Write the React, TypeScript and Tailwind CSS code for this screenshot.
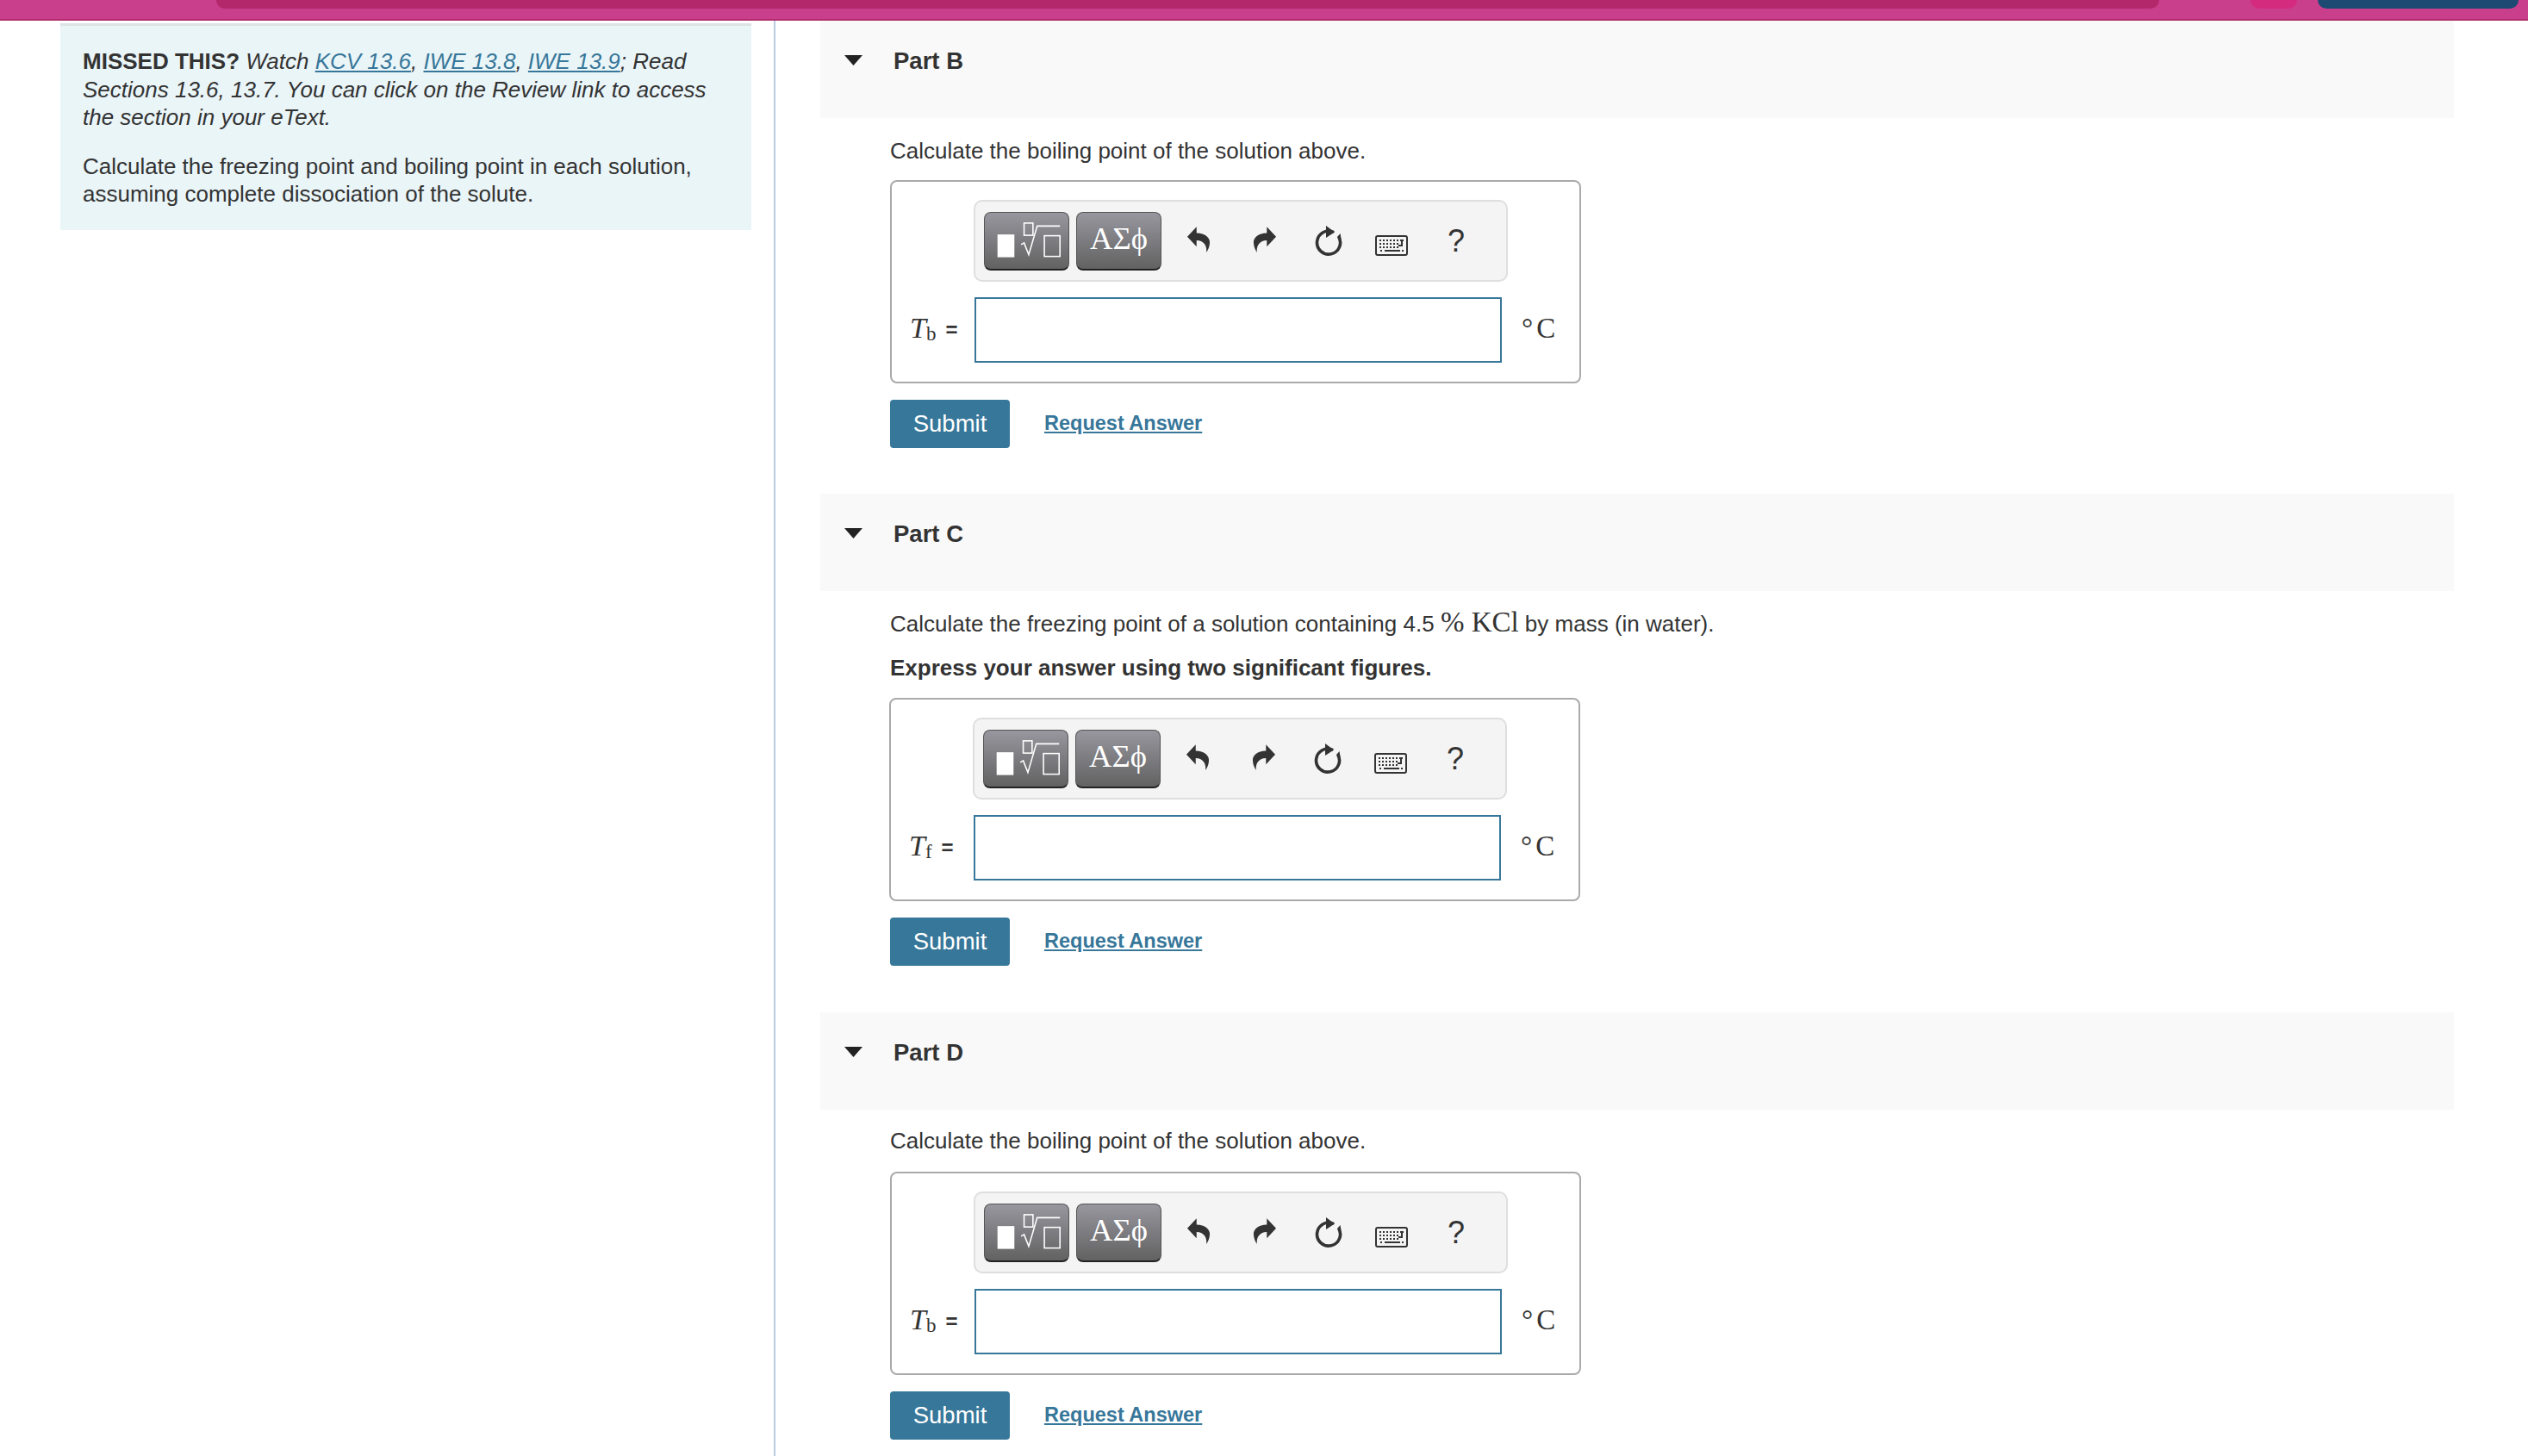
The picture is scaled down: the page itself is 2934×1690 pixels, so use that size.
const serif = "font-['Liberation_Serif',serif]";

const MatrixIcon = () => (
  <svg width="99" height="68" viewBox="0 0 99 68" fill="none" stroke="#fff" strokeWidth="1.6">
    <rect x="15" y="27" width="20" height="27" fill="#fff" stroke="none" />
    <rect x="46.5" y="13.5" width="10.5" height="14.5" />
    <path d="M43 39 L46.5 37 L52 51 L62 17 L89 17" />
    <rect x="70.5" y="28.5" width="18.5" height="24.5" />
  </svg>
);

const ReplyIcon = ({ flip }: { flip?: boolean }) => (
  <svg width="28" height="32" viewBox="112 67 86 96" className={flip ? "-scale-x-100" : ""}>
    <path d="M115 105 L148 70 V92 C178 92 197 108 195 128 C194 142 189 152 183 161 C186 140 176 118 148 118 V140 Z" fill="#333" />
  </svg>
);

const RefreshIcon = () => (
  <svg width="34" height="38" viewBox="0 0 34 38" fill="none">
    <path d="M24 8.5 A13.5 13.5 0 1 0 29.5 13.5" stroke="#333" strokeWidth="3.6" />
    <path d="M15 1 L25 8.5 L15 15 Z" fill="#333" />
    <path d="M28 14 L31.5 10 L32.5 16 Z" fill="#333" />
  </svg>
);

const KeyboardIcon = () => (
  <svg width="38" height="24" viewBox="0 0 38 24" fill="none">
    <rect x="1" y="1" width="36" height="22" rx="2" stroke="#333" strokeWidth="2" />
    <path d="M5 6h2M9 6h2M13 6h2M17 6h2M21 6h2M25 6h2M29 6h4M5 10h2M9 10h2M13 10h2M17 10h2M21 10h2M25 10h2M31 7v5M27 12h5M5 14h2M9 14h2M13 14h2M17 14h2M21 14h2M25 14h2M6 18h2M11 18h18M31 18h2" stroke="#333" strokeWidth="2" />
  </svg>
);

const Toolbar = () => (
  <div className="flex h-[95px] w-[620px] items-center rounded-[10px] border-2 border-[#dedede] bg-[#f4f4f4] pl-[10px]">
    <button className="flex h-[68px] w-[99px] items-center justify-center rounded-[8px] border border-[#555] border-b-2 border-b-[#222] bg-gradient-to-b from-[#98979f] to-[#626262]">
      <MatrixIcon />
    </button>
    <button className={`ml-[8px] flex h-[68px] w-[99px] items-center justify-center rounded-[8px] border border-[#555] border-b-2 border-b-[#222] bg-gradient-to-b from-[#98979f] to-[#626262] pb-[4px] text-[36.5px] text-white ${serif}`}>
      ΑΣϕ
    </button>
    <span className="ml-[5px] flex w-[75px] justify-center pb-[3px]">
      <ReplyIcon />
    </span>
    <span className="flex w-[80px] justify-center pb-[3px]">
      <ReplyIcon flip />
    </span>
    <span className="flex w-[65px] justify-center">
      <RefreshIcon />
    </span>
    <span className="flex w-[83px] justify-center pt-[10px]">
      <KeyboardIcon />
    </span>
    <span className="flex w-[68px] justify-center text-[36px] leading-none text-[#333]">?</span>
  </div>
);

type PartProps = {
  name: string;
  symbol: string;
  shift?: boolean;
  children: React.ReactNode;
  bodyPad: string;
  gap?: string;
};

const Part = ({ name, symbol, shift, children, bodyPad, gap = "mb-[53px]" }: PartProps) => (
  <section className={gap}>
    <div className="flex h-[113px] items-start bg-[#f9f9f9] pl-[28px] pt-[28px]">
      <svg width="21" height="12" viewBox="0 0 21 12" className="mt-[12px]">
        <path d="M0 0H21L10.5 12Z" fill="#222" />
      </svg>
      <h3 className="ml-[36px] text-[27.5px] font-bold leading-[38px] text-[#333]">{name}</h3>
    </div>
    <div className={`pl-[81px] ${bodyPad}`}>
      {children}
      <div className={`w-[802px] rounded-[8px] border-2 border-[#aaaaaa] ${shift ? "-ml-[1px]" : ""}`}>
        <div className="ml-[95px] mt-[21px]">
          <Toolbar />
        </div>
        <div className="mb-[22px] mt-[18px] flex items-center">
          <div className="flex w-[96px] items-center pb-[4px] pl-[21px] text-[#333]">
            <span className={`text-[34px] italic leading-none ${serif}`}>T</span>
            <span className={`mt-[12px] text-[23px] leading-none ${serif}`}>{symbol}</span>
            <span className="ml-[11px] mt-[4px] text-[24px] font-bold leading-none">=</span>
          </div>
          <div className="h-[76px] w-[612px] border-2 border-[#37779a] bg-white" />
          <div className={`ml-[23px] flex pb-[3px] text-[33px] leading-none text-[#333] ${serif}`}>
            <span className="mr-[4px]">°</span>C
          </div>
        </div>
      </div>
      <div className="mt-[19px] flex items-center">
        <button className="h-[56px] w-[139px] rounded-[4px] bg-[#37779a] text-[27.5px] text-white">Submit</button>
        <a className="ml-[40px] text-[23.5px] font-bold text-[#37779a] underline">Request Answer</a>
      </div>
    </div>
  </section>
);

export default function App() {
  return (
    <div className="flex h-[1690px] w-[2934px] flex-col overflow-hidden bg-white font-['Liberation_Sans',sans-serif] text-[#333]">
      <header className="flex h-[24px] shrink-0 items-start border-b-2 border-[#b32b6d] bg-[#c93f8c]">
        <div className="ml-[251px] h-[10px] w-[2255px] rounded-b-[22px] bg-[#b3276b]" />
        <div className="ml-[106px] h-[10px] w-[54px] rounded-b-full bg-[#d52b7e]" />
        <div className="ml-[24px] h-[10px] w-[233px] rounded-b-[22px] bg-[#1d4a72]" />
      </header>
      <div className="flex min-h-0 flex-1">
        <aside className="w-[900px] shrink-0 border-r-2 border-[#b9cde0] pl-[70px] pt-[3px]">
          <div className="h-[240px] w-[802px] border-t-[3px] border-[#dde3e3] bg-[#eaf5f8] px-[26px] pt-[25px] text-[26px] leading-[32.5px]">
            <p>
              <strong>MISSED THIS?</strong>{" "}
              <em>
                Watch <a className="text-[#37779a] underline">KCV 13.6</a>,{" "}
                <a className="text-[#37779a] underline">IWE 13.8</a>,{" "}
                <a className="text-[#37779a] underline">IWE 13.9</a>; Read Sections 13.6, 13.7. You can click on the Review link to access the section in your eText.
              </em>
            </p>
            <p className="mt-[24px]">
              Calculate the freezing point and boiling point in each solution, assuming complete dissociation of the solute.
            </p>
          </div>
        </aside>
        <main className="ml-[52px] w-[1896px] shrink-0">
          <Part name="Part B" symbol="b" bodyPad="pt-[20px]">
            <p className="mb-[16px] text-[26px] leading-[36px]">Calculate the boiling point of the solution above.</p>
          </Part>
          <Part name="Part C" symbol="f" shift bodyPad="pt-[20px]" gap="mb-[54px]">
            <p className="text-[26px] leading-[36px]">
              Calculate the freezing point of a solution containing 4.5{" "}
              <span className={`text-[33px] leading-none ${serif}`}>% KCl</span> by mass (in water).
            </p>
            <p className="mb-[17px] mt-[15px] text-[26px] font-bold leading-[36px]">
              Express your answer using two significant figures.
            </p>
          </Part>
          <Part name="Part D" symbol="b" bodyPad="pt-[18px]">
            <p className="mb-[18px] text-[26px] leading-[36px]">Calculate the boiling point of the solution above.</p>
          </Part>
        </main>
      </div>
    </div>
  );
}
